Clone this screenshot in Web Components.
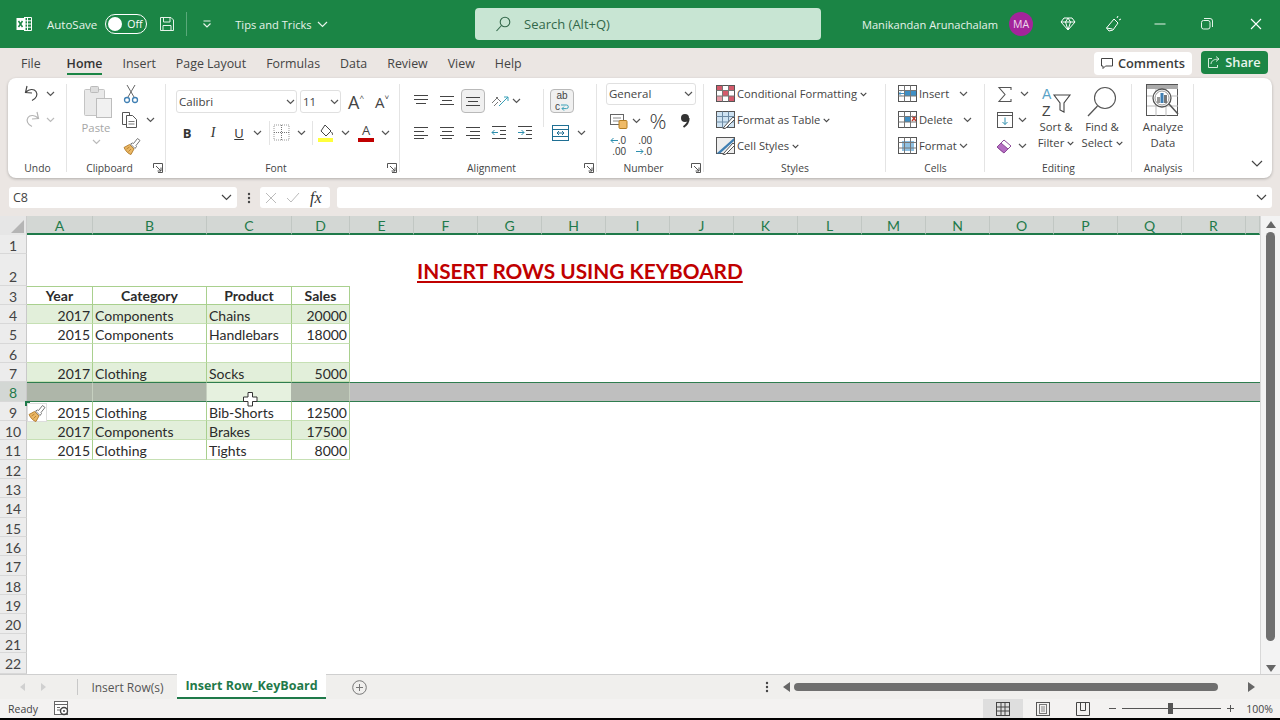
<!DOCTYPE html>
<html>
<head>
<meta charset="utf-8">
<title>Excel</title>
<style>
  html, body { margin: 0; padding: 0; background: #000; }
  body { width: 1280px; height: 720px; overflow: hidden; font-family: "Open Sans", sans-serif; }
  x-app { width: 1280px; height: 718px; }
</style>
</head>
<body>
<x-app></x-app>
<script>
const chev = (c = '#555') => `<svg width="9" height="6" viewBox="0 0 9 6"><path d="M1 1l3.500 3.500L8 1" fill="none" stroke="${c}" stroke-width="1.200"/></svg>`
const tchev = () => '<svg width="7" height="5" viewBox="0 0 7 5"><path d="M.7 .8l2.800 2.800L6.300 .8" fill="none" stroke="#444" stroke-width="1.100"/></svg>'
const svg = (w, h, body, extra = '') => `<svg width="${w}" height="${h}" viewBox="0 0 ${w} ${h}" fill="none" ${extra}>${body}</svg>`
const lines = (rows, c = '#444') => svg(16, 14, rows.map(([x1, x2, y]) => `<path d="M${x1} ${y}.5H${x2}" stroke="${c}"/>`).join(''))
const gridTable = (fill) => svg(20, 18, `${fill}<rect x=".5" y=".5" width="18" height="16" stroke="#555"/><path d="M.5 5.500h18M.5 11h18M6.500 .5v16M12.500 .5v16" stroke="#777"/>`)

const ICONS = {
  undo: svg(18, 20, '<path d="M4 2L2.500 8.500 9 9M3 8c3-3 8-3.500 10-.5 2 3 .5 7-4 9" stroke="#444" stroke-width="1.200"/>'),
  redo: svg(18, 20, '<path d="M14 2l1.500 6.500L9 9M15 8c-3-3-8-3.500-10-.5-2 3-.5 7 4 9" stroke="#b4b4b4" stroke-width="1.200"/>'),
  paste: svg(30, 34, '<rect x="1.500" y="4.500" width="20" height="26" rx="1" fill="#e9e9e9" stroke="#c4c4c4"/><rect x="7.500" y="1.500" width="8" height="6" rx="1" fill="#ddd" stroke="#bbb"/><rect x="13.500" y="13.500" width="15" height="19" fill="#f1f1f1" stroke="#bdbdbd"/>'),
  cut: svg(16, 20, '<path d="M4 1l7 12M12 1L5 13" stroke="#666"/><circle cx="4" cy="16" r="2.500" stroke="#3f7fb3" stroke-width="1.300"/><circle cx="12" cy="16" r="2.500" stroke="#3f7fb3" stroke-width="1.300"/>'),
  copy: svg(18, 18, '<path d="M5.500 13.500h-4v-12h7v3" stroke="#555"/><path d="M5.500 4.500h6l4 4v8h-10z" fill="#fff" stroke="#555"/><path d="M7.500 10.500h6M7.500 13h6" stroke="#777"/>'),
  painter: svg(18, 18, '<path d="M1 10.500l5.500-3 4.500 4.500-3 5.500c-2.500-.5-5.500-3.500-7-7z" fill="#eab765" stroke="#a8701c" stroke-width=".8"/><path d="M3.500 12l3-2M5.500 14.500l2.500-2.500" stroke="#a8701c" stroke-width=".7"/><path d="M7.500 7l2-1 1 .5 4-5 2.500 2-4 5 .5 1-1.500 2z" fill="#fff" stroke="#666" stroke-width=".9"/>'),
  border: svg(18, 18, '<rect x="1" y="1" width="15" height="15" stroke="#999" stroke-dasharray="1 1"/><path d="M8.500 1v15M1 8.500h15" stroke="#777" stroke-dasharray="1 1"/>'),
  fill: svg(18, 18, '<path d="M8 1l6 6-5 5-5-5z" stroke="#444" fill="#fff"/><path d="M14.500 8c1 1.500 1.500 2.500.5 3" stroke="#444"/><rect x="1" y="14" width="15" height="4" fill="#ffff3c"/>'),
  fontcolor: `<span style="display:block;font:13px/13px 'Open Sans',sans-serif;color:#444;text-align:center;width:16px">A<span style="display:block;height:4px;margin-top:1px;background:#c00000"></span></span>`,
  orient: svg(20, 18, '<path d="M2 11l6-6M4 14l4-4M6 5l5 5" stroke="#777"/><path d="M9 14l9-9M18 5h-4M18 5v4" stroke="#38a0b8"/>'),
  merge: svg(20, 18, '<rect x="1.500" y="1.500" width="16" height="15" fill="#fff" stroke="#1f6f93"/><path d="M1.500 5.500h16M1.500 12.500h16M6 9h7M6 9l2-2M6 9l2 2M13 9l-2-2M13 9l-2 2" stroke="#1f6f93"/>'),
  outdent: svg(16, 14, '<path d="M1 .5h14M9 4.500h6M9 8.500h6M1 12.500h14" stroke="#444"/><path d="M1 6.500h6M1 6.500l2.500-2.500M1 6.500l2.500 2.500" stroke="#2e8fae"/>'),
  indent: svg(16, 14, '<path d="M1 .5h14M9 4.500h6M9 8.500h6M1 12.500h14" stroke="#444"/><path d="M7 6.500H1M7 6.500L4.500 4M7 6.500L4.500 9" stroke="#2e8fae"/>'),
  account: svg(20, 18, '<rect x="1.500" y="2.500" width="13" height="10" fill="#fff" stroke="#666"/><path d="M4 6h8M4 9h8" stroke="#888"/><rect x="10" y="8.500" width="8" height="8" rx="1" fill="#f0bb67" stroke="#b57e22"/>'),
  comma: svg(10, 16, '<circle cx="5" cy="5" r="4" fill="#333"/><path d="M8.500 5c.5 4-2 7-5 9" stroke="#333" stroke-width="2"/>'),
  cond: gridTable('<rect x="1" y="1" width="5" height="5" fill="#d35a6b"/><rect x="13" y="1" width="5" height="5" fill="#d35a6b"/><rect x="7" y="6" width="5" height="5" fill="#d35a6b"/><rect x="1" y="11" width="5" height="5" fill="#e89aa5"/><rect x="13" y="11" width="5" height="5" fill="#d35a6b"/>'),
  table: svg(20, 18, '<rect x=".5" y=".5" width="18" height="16" fill="#cfe3f2" stroke="#555"/><path d="M.5 5.500h18M.5 11h18M6.500 .5v16M12.500 .5v16" stroke="#6d8ba5"/><path d="M8 16l9-10 2 2-9 9-3 1z" fill="#fff" stroke="#555"/>'),
  cellstyle: svg(20, 18, '<rect x=".5" y=".5" width="18" height="16" fill="#eee" stroke="#555"/><path d="M.5 16.500L18 1v3L4 16.500z" fill="#3f7fb3"/><path d="M8 16l9-10 2 2-9 9-3 1z" fill="#fff" stroke="#555"/>'),
  insert: gridTable('<rect x="7" y="6" width="11" height="5" fill="#3f8fc4"/><path d="M1 8.500h5M1 8.500l2-2M1 8.500l2 2" stroke="#3f8fc4"/>'),
  del: gridTable('<rect x="7" y="6" width="5" height="5" fill="#3f8fc4"/><path d="M14 5l4 5M18 5l-4 5" stroke="#c0392b" stroke-width="1.400"/>'),
  format: gridTable('<rect x="4" y="4" width="12" height="10" fill="#8fc1e3"/>'),
  sigma: svg(16, 17, '<path d="M14 4V1.500H2L8 8.500l-6 7h12V13" stroke="#555" stroke-width="1.100"/>'),
  filldown: svg(18, 17, '<rect x="1.500" y=".5" width="15" height="15" fill="#fff" stroke="#555"/><path d="M1.500 3.500h15" stroke="#555"/><path d="M9 5.500v7M9 12.500l-2.500-2.500M9 12.500l2.500-2.500" stroke="#2e8fae"/>'),
  clear: svg(18, 16, '<path d="M1 9l7-7 7 6-7 7z" fill="#fff" stroke="#8c4a97"/><path d="M1 9l4-4 7 6-4 4z" fill="#b56cc2" stroke="#8c4a97"/>'),
  sort: svg(32, 32, `<text x="2" y="13" font-family="Liberation Sans,sans-serif" font-size="14" fill="#5aa3c7">A</text><text x="2" y="29.500" font-family="Liberation Sans,sans-serif" font-size="14" fill="#444">Z</text><path d="M14 9h16l-6 8v9l-4-2v-7z" fill="#fff" stroke="#444" stroke-width="1.100"/>`),
  find: svg(32, 32, '<circle cx="19" cy="12" r="10.500" stroke="#555" stroke-width="1.100"/><path d="M11.500 20L2 30" stroke="#555" stroke-width="1.300"/>'),
  analyze: svg(34, 34, '<rect x=".5" y=".5" width="31" height="31" fill="#fff" stroke="#555"/><rect x="1" y="1" width="31" height="4" fill="#aaa"/><path d="M1 12h31M1 22h31M10 5v27M20 5v27" stroke="#bbb"/><circle cx="16" cy="14" r="9" fill="#fff" stroke="#555" stroke-width="1.300"/><circle cx="16" cy="14" r="7" fill="#fff" stroke="#999"/><rect x="11" y="13" width="3" height="6" fill="#999"/><rect x="14.500" y="9" width="3" height="10" fill="#3f7fb3"/><rect x="18" y="11" width="3" height="8" fill="#777"/><path d="M23 20l9 10" stroke="#555" stroke-width="1.500"/>'),
  launcher: svg(10, 10, '<path d="M.5 5V.5H9.500V9.500H5" stroke="#555"/><path d="M3 3l5 5M8 4.500V8H4.500" stroke="#555"/>'),
}

// a row of cells placed by their centre x, in flow: each cell only gets a margin from the one before
const cells = (x0, list) => {
  let x = x0
  return list.map(([cx, content, w = 20]) => {
    const left = cx - w / 2
    const html = `<span class="c" style="width:${w}px;margin-left:${left - x}px">${content}</span>`
    x = left + w
    return html
  }).join('')
}

class XGroup extends HTMLElement {
  constructor() {
    super()
    const w = this.getAttribute('width')
    const launcher = this.hasAttribute('launcher')
    this.attachShadow({ mode: 'open' }).innerHTML = `
      <style>
        :host { display: block; width: ${w}px; height: 100px; padding: 6px 0; box-sizing: border-box; flex: none; }
        .box { height: 88px; border-right: 1px solid ${this.hasAttribute('nosep') ? 'transparent' : '#e4e4e4'}; display: flex; flex-direction: column; box-sizing: border-box; }
        .body { flex: 1; min-height: 0; }
        .foot { height: 16px; margin-bottom: -4px; display: flex; align-items: center; justify-content: center; position: relative; font-size: 10.300px; color: #444; padding: 0 ${launcher ? 14 : 0}px 0 1px; }
        .launch { position: absolute; right: 2px; top: 3px; line-height: 0; }
      </style>
      <div class="box">
        <div class="body"><slot></slot></div>
        <div class="foot">${this.getAttribute('label')}${launcher ? `<span class="launch">${ICONS.launcher}</span>` : ''}</div>
      </div>`
  }
}
customElements.define('x-group', XGroup)

class XRibbon extends HTMLElement {
  constructor() {
    super()
    this.attachShadow({ mode: 'open' }).innerHTML = `
      <style>
        :host { display: flex; margin: 0 8px; width: 1264px; height: 100px; background: #fff; border-radius: 8px; box-shadow: 0 1px 3px rgba(0,0,0,.25); font-size: 11.200px; color: #444; position: relative; flex: none; }
        .r { display: flex; align-items: center; }
        .c { display: inline-flex; flex: none; align-items: center; justify-content: center; line-height: 0; }
        .ic { display: inline-flex; flex: none; width: 20px; line-height: 0; }
        .t { margin: 0 0 2px 1px; white-space: nowrap; }
        .t svg { vertical-align: 1px; }
        .dd { box-sizing: border-box; background: #fff; border: 1px solid #e0e0e0; border-radius: 3px; height: 23px; display: flex; align-items: center; justify-content: space-between; padding: 0 1px 0 2px; line-height: 14px; font-size: 11.500px; color: #444; }
        .sep { display: block; width: 1px; height: 24px; background: #e4e4e4; }
        .on { box-sizing: border-box; width: 24px; height: 24px; background: #f0f0f0; border: 1px solid #b9b9b9; border-radius: 4px; }
        .pct { font-size: 21px; line-height: 21px; font-weight: 300; color: #333; }
        .num { font: 10px/11.500px "Liberation Sans", sans-serif; text-align: right; color: #444; white-space: nowrap; }
        .big { display: flex; flex-direction: column; align-items: center; flex: none; font-size: 11.300px; line-height: 16px; white-space: nowrap; }
        .big .pic { height: 30px; display: flex; align-items: center; justify-content: center; margin-bottom: 2px; }
        .big svg { vertical-align: 1px; }
        .gray { color: #a6a6a6; }
        .aa { font-size: 18px; line-height: 18px; color: #444; }
        .aa sup { font-size: 8px; line-height: 8px; vertical-align: 8px; }
        .b { font-weight: 700; font-size: 13px; color: #333; } .i { font-style: italic; font-family: "Liberation Serif", serif; font-size: 14px; color: #333; } .u { text-decoration: underline; font-size: 13px; color: #333; }
        .collapse { position: absolute; right: 9px; bottom: 10px; line-height: 0; }
        .wrap { display: block; font: 10px/11px "Liberation Sans", sans-serif; text-align: center; color: #444; }
        .wrap svg { vertical-align: -1px; }
      </style>
      <x-group width="59" label="Undo">
        <div class="r" style="height:26px;margin-top:-3px">${cells(0, [[24, ICONS.undo], [42, chev()]])}</div>
        <div class="r" style="height:26px">${cells(0, [[24, ICONS.redo], [42, chev('#bbb')]])}</div>
      </x-group>
      <x-group width="99" label="Clipboard" launcher>
        <div class="r" style="align-items:flex-start;margin-top:-3px;height:78px">
          <div class="big gray" style="width:30px;margin-left:14px;padding-top:4px"><div class="pic" style="height:36px;margin:-1px 0 0 3px">${ICONS.paste}</div>Paste<span style="line-height:10px;margin-top:1px">${chev('#bbb')}</span></div>
          <div style="margin-left:10px;width:46px">
            <div class="r" style="height:26px">${cells(0, [[10, ICONS.cut]])}</div>
            <div class="r" style="height:26px">${cells(0, [[9, ICONS.copy], [29, chev()]])}</div>
            <div class="r" style="height:26px">${cells(0, [[11, ICONS.painter]])}</div>
          </div>
        </div>
      </x-group>
      <x-group width="234" label="Font" launcher>
        <div class="r" style="margin:6px 0 8px;height:23px">
          <div class="dd" style="width:121px;margin-left:10px"><span>Calibri</span>${chev()}</div>
          <div class="dd" style="width:41px;margin-left:3px"><span>11</span>${chev()}</div>
          ${cells(0, [[15, '<span class="aa">A<sup>^</sup></span>', 26], [41, '<span class="aa" style="font-size:15px">A<sup>˅</sup></span>', 26]])}
        </div>
        <div class="r" style="height:24px">${cells(0, [
          [21, '<span class="b">B</span>'], [47, '<span class="i">I</span>'], [73, '<span class="u">U</span>'], [91, chev(), 12],
          [103, '<span class="sep"></span>', 1], [116, ICONS.border], [135, chev(), 10], [146, '<span class="sep"></span>', 1],
          [160, ICONS.fill], [179, chev(), 10], [200, ICONS.fontcolor], [219, chev(), 10]])}</div>
      </x-group>
      <x-group width="197" label="Alignment" launcher>
        <div class="r" style="margin:5px 0 8px;height:24px">${cells(0, [
          [21, lines([[1, 15, 1], [1, 15, 5], [3, 13, 9]])], [47, lines([[1, 15, 2], [3, 13, 6], [1, 15, 10]])],
          [73, `<span class="c on">${lines([[1, 15, 3], [3, 13, 7], [1, 15, 11]])}</span>`, 24], [100, ICONS.orient], [116, chev(), 10],
          [143, '<span class="sep" style="height:38px;margin-top:14px"></span>', 1],
          [162, `<span class="c on"><span class="wrap">ab<br>c${svg(9, 8, '<path d="M1 2h5.500a1.800 1.800 0 010 3.600H2M4 3.600L2 5.600l2 2" stroke="#3aa1b8"/>')}</span></span>`, 24]])}</div>
        <div class="r" style="height:24px">${cells(0, [
          [21, lines([[1, 15, 1], [1, 11, 5], [1, 15, 9], [1, 11, 12]])], [47, lines([[1, 15, 1], [3, 13, 5], [1, 15, 9], [3, 13, 12]])],
          [73, lines([[1, 15, 1], [5, 15, 5], [1, 15, 9], [5, 15, 12]])], [99, ICONS.outdent], [125, ICONS.indent],
          [161, ICONS.merge], [181, chev(), 10]])}</div>
      </x-group>
      <x-group width="107" label="Number" launcher>
        <div class="dd" style="width:90px;height:22px;margin:-1px 0 3px 9px;padding-right:2px"><span>General</span>${chev()}</div>
        <div class="r" style="height:26px">${cells(0, [[22, ICONS.account], [39, chev(), 10], [61, '<span class="pct">%</span>', 24], [88, ICONS.comma, 12]])}</div>
        <div class="r" style="height:24px">${cells(0, [
          [21, `<span class="num">${svg(8, 7, '<path d="M8 3.500H1M1 3.500L3.500 1M1 3.500L3.500 6" stroke="#2e8fae"/>')}.0<br>.00</span>`, 24],
          [47, `<span class="num">.00<br>${svg(8, 7, '<path d="M0 3.500h7M7 3.500L4.500 1M7 3.500L4.500 6" stroke="#2e8fae"/>')}.0</span>`, 24]])}</div>
      </x-group>
      <x-group width="182" label="Styles">
        <div style="margin-top:-3px">
          <div class="r" style="height:26px;padding-left:12px"><span class="ic">${ICONS.cond}</span><span class="t">Conditional Formatting ${tchev()}</span></div>
          <div class="r" style="height:26px;padding-left:12px"><span class="ic">${ICONS.table}</span><span class="t">Format as Table ${tchev()}</span></div>
          <div class="r" style="height:26px;padding-left:12px"><span class="ic">${ICONS.cellstyle}</span><span class="t">Cell Styles ${tchev()}</span></div>
        </div>
      </x-group>
      <x-group width="99" label="Cells">
        <div style="margin-top:-3px">
          <div class="r" style="height:26px;padding-left:12px"><span class="ic">${ICONS.insert}</span><span class="t">Insert</span><span style="margin-left:10px;line-height:0">${chev()}</span></div>
          <div class="r" style="height:26px;padding-left:12px"><span class="ic">${ICONS.del}</span><span class="t">Delete</span><span style="margin-left:10px;line-height:0">${chev()}</span></div>
          <div class="r" style="height:26px;padding-left:12px"><span class="ic">${ICONS.format}</span><span class="t">Format</span><span style="margin-left:2px;line-height:0">${chev()}</span></div>
        </div>
      </x-group>
      <x-group width="147" label="Editing">
        <div class="r" style="align-items:flex-start;margin-top:-3px">
          <div style="width:46px">
            <div class="r" style="height:26px">${cells(0, [[20, ICONS.sigma], [39, chev(), 10]])}</div>
            <div class="r" style="height:26px">${cells(0, [[20, ICONS.filldown], [37, chev(), 10]])}</div>
            <div class="r" style="height:26px">${cells(0, [[20, ICONS.clear], [37, chev(), 10]])}</div>
          </div>
          <div class="big" style="width:48px;margin-left:1px;padding-top:6px"><div class="pic">${ICONS.sort}</div>Sort &amp;<span>Filter ${tchev()}</span></div>
          <div class="big" style="width:48px;margin-left:-2px;padding-top:6px"><div class="pic">${ICONS.find}</div>Find &amp;<span>Select ${tchev()}</span></div>
        </div>
      </x-group>
      <x-group width="62" label="Analysis">
        <div class="big" style="padding-left:1px"><div class="pic" style="height:34px;margin-bottom:1px">${ICONS.analyze}</div>Analyze<span>Data</span></div>
      </x-group>
      <span class="collapse">${svg(12, 8, '<path d="M1 1l5 5 5-5" stroke="#444" stroke-width="1.200"/>')}</span>`
  }
}
customElements.define('x-ribbon', XRibbon)

class XTitlebar extends HTMLElement {
  constructor() {
    super()
    this.attachShadow({ mode: 'open' }).innerHTML = `
      <style>
        :host { display: flex; align-items: center; height: 48px; background: #1b8545; color: #fff; font-size: 11.100px; flex: none; }
        .left { width: 475px; flex: none; display: flex; align-items: center; }
        .right { flex: 1; display: flex; align-items: center; justify-content: flex-end; padding-right: 12px; }
        .logo { margin-left: 16px; line-height: 0; }
        .auto { margin-left: 15px; color: #e6f3ea; font-size: 11.500px; }
        .toggle { margin-left: 8px; width: 42px; height: 20px; box-sizing: border-box; border: 1px solid #fff; border-radius: 10px; display: flex; align-items: center; font-size: 10.500px; }
        .toggle i { width: 14px; height: 14px; border-radius: 50%; background: #fff; margin: 0 5px 0 2px; }
        .save { margin-left: 12px; line-height: 0; }
        .div { margin-left: 11px; width: 1px; height: 24px; background: #5aa97a; }
        .qat { margin-left: 15px; line-height: 0; }
        .doc { margin-left: 23px; color: #e6f3ea; white-space: nowrap; }
        .doc svg { margin-left: 5px; vertical-align: 1px; }
        .search { width: 346px; height: 32px; border-radius: 4px; background: #c8e5d3; color: #33684a; display: flex; align-items: center; font-size: 13px; flex: none; }
        .search svg { margin: 0 13px 0 20px; }
        .name { white-space: nowrap; color: #e6f3ea; }
        .avatar { margin-left: 11px; width: 24px; height: 24px; border-radius: 50%; background: #a3249b; display: flex; align-items: center; justify-content: center; font-size: 10.500px; color: #eedcec; }
        .w { line-height: 0; display: flex; justify-content: center; width: 24px; }
      </style>
      <div class="left">
        <span class="logo">${svg(16, 16, '<path d="M8 1.500h7.500v13H8" stroke="#fff"/><path d="M8 4.800h7.500M8 8h7.500M8 11.200h7.500M11.500 1.500v13" stroke="#fff"/><rect x=".5" y="2" width="9" height="12" fill="#fff"/><path d="M2.500 5l4 6M6.500 5l-4 6" stroke="#1b8545" stroke-width="1.500"/>')}</span>
        <span class="auto">AutoSave</span>
        <span class="toggle"><i></i>Off</span>
        <span class="save">${svg(16, 16, '<path d="M1.500 1.500h10.500l2.500 2.500v10.500H1.500z" stroke="#e6f3ea"/><path d="M4.500 1.500v4.500h6.500V1.500M4 14.500V9.500h8v5" stroke="#e6f3ea"/>')}</span>
        <span class="div"></span>
        <span class="qat">${svg(10, 8, '<path d="M1.500 1h7" stroke="#e6f3ea"/><path d="M1.500 3.500L5 7l3.500-3.500" stroke="#e6f3ea" stroke-width="1.200"/>')}</span>
        <span class="doc">Tips and Tricks${svg(11, 7, '<path d="M1 1l4.500 4.500L10 1" stroke="#e6f3ea" stroke-width="1.200"/>')}</span>
      </div>
      <div class="search">${svg(16, 16, '<circle cx="10" cy="6" r="4.800" stroke="#33684a" stroke-width="1.100"/><path d="M6.500 9.500L1.500 15" stroke="#33684a" stroke-width="1.100"/>')}Search (Alt+Q)</div>
      <div class="right">
        <span class="name">Manikandan Arunachalam</span>
        <span class="avatar">MA</span>
        <span class="w" style="margin-left:23px">${svg(16, 14, '<path d="M4 1h8l3 4-7 8-7-8zM1 5h14M5.500 5L8 13l2.500-8M5.500 5L8 1l2.500 4" stroke="#fff" stroke-width="1"/>')}</span>
        <span class="w" style="margin-left:21px">${svg(16, 18, '<path d="M4 16L1.500 13 9 4l4 4-5 7zM1.500 13l6 1" stroke="#fff"/><path d="M12 3l1-2M14 5l2-1" stroke="#fff"/>')}</span>
        <span class="w" style="margin-left:23px">${svg(12, 2, '<path d="M.5 1h11" stroke="#e6f3ea"/>')}</span>
        <span class="w" style="margin-left:23px">${svg(12, 12, '<rect x=".5" y="2.500" width="8.500" height="8.500" rx="2" stroke="#e6f3ea"/><path d="M3 .5h6a2.500 2.500 0 012.500 2.500v6" stroke="#e6f3ea"/>')}</span>
        <span class="w" style="margin-left:25px">${svg(12, 12, '<path d="M1 1l10 10M11 1L1 11" stroke="#fff" stroke-width="1.100"/>')}</span>
      </div>`
  }
}
customElements.define('x-titlebar', XTitlebar)

class XTabs extends HTMLElement {
  constructor() {
    super()
    const tabs = ['File', 'Home', 'Insert', 'Page Layout', 'Formulas', 'Data', 'Review', 'View', 'Help']
    this.attachShadow({ mode: 'open' }).innerHTML = `
      <style>
        :host { display: flex; align-items: center; height: 30px; background: #ebe6e3; font-size: 12.400px; color: #444; flex: none; }
        .list { display: flex; align-items: center; gap: 20px; margin-left: 21px; }
        .tab { position: relative; white-space: nowrap; }
        .tab.on { font-weight: 600; color: #333; margin-left: 6px; }
        .tab.on::after { content: ""; position: absolute; left: 0; right: 0; bottom: -3px; height: 2px; background: #1b8545; }
        .right { margin-left: auto; display: flex; align-items: center; margin-right: 12px; }
        button { all: unset; display: flex; align-items: center; justify-content: center; height: 23px; padding-bottom: 2px; border-radius: 4px; font-size: 12.800px; font-weight: 600; box-sizing: border-box; }
        .comments { width: 98px; background: #fff; color: #3c3c3c; margin-right: 9px; margin-top: 1px; }
        .share { width: 67px; background: #1b8545; color: #e9f5ee; margin-top: -1px; }
        button svg { margin-right: 5px; }
      </style>
      <div class="list">${tabs.map(t => `<span class="tab${t === 'Home' ? ' on' : ''}">${t}</span>`).join('')}</div>
      <div class="right">
        <button class="comments">${svg(12, 12, '<path d="M.5 1.500h11v7.500H4.500L2 11.500V9H.5z" stroke="#444"/>')}Comments</button>
        <button class="share">${svg(12, 12, '<path d="M4 2.500H.5v9h9V9" stroke="#d3ecdc"/><path d="M3 8c0-3 3-5 8-5M8 .5L11 3 8 5.500" stroke="#d3ecdc"/>')}Share</button>
      </div>`
  }
}
customElements.define('x-tabs', XTabs)

class XFormulaBar extends HTMLElement {
  constructor() {
    super()
    this.attachShadow({ mode: 'open' }).innerHTML = `
      <style>
        :host { display: flex; height: 38px; padding: 9px 8px 8px 9px; box-sizing: border-box; background: #ebe6e3; flex: none; align-items: stretch; font-size: 12.500px; color: #444; }
        .box { background: #fff; border-radius: 3px; display: flex; align-items: center; }
        .name { width: 228px; padding: 0 5px 0 4px; box-sizing: border-box; justify-content: space-between; }
        .dots { width: 23px; display: flex; align-items: center; justify-content: center; line-height: 0; }
        .fx { width: 70px; padding-left: 5px; box-sizing: border-box; gap: 9px; }
        .fx i { font: italic 16px "Liberation Serif", serif; color: #333; margin-left: 1px; }
        .input { flex: 1; margin-left: 7px; justify-content: flex-end; padding-right: 5px; }
      </style>
      <div class="box name"><span>C8</span>${svg(11, 7, '<path d="M1 1l4.500 4.500L10 1" stroke="#444" stroke-width="1.200"/>')}</div>
      <div class="dots">${svg(4, 12, '<circle cx="2" cy="2" r="1.200" fill="#444"/><circle cx="2" cy="6" r="1.200" fill="#444"/><circle cx="2" cy="10" r="1.200" fill="#444"/>')}</div>
      <div class="box fx">${svg(12, 12, '<path d="M1 1l10 10M11 1L1 11" stroke="#bbb"/>')}${svg(14, 11, '<path d="M1 6l4 4 8-9" stroke="#bbb"/>')}<i>fx</i></div>
      <div class="box input">${svg(11, 7, '<path d="M1 1l4.500 4.500L10 1" stroke="#444" stroke-width="1.200"/>')}</div>`
  }
}
customElements.define('x-formula-bar', XFormulaBar)

class XSheet extends HTMLElement {
  constructor() {
    super()
    const widths = [27, 66, 114, 85, 58, ...Array(14).fill(64), 14]
    const letters = 'ABCDEFGHIJKLMNOPQR'.split('')
    const data = {
      3: ['Year', 'Category', 'Product', 'Sales'],
      4: ['2017', 'Components', 'Chains', '20000'],
      5: ['2015', 'Components', 'Handlebars', '18000'],
      6: ['', '', '', ''],
      7: ['2017', 'Clothing', 'Socks', '5000'],
      8: ['', '', '', ''],
      9: ['2015', 'Clothing', 'Bib-Shorts', '12500'],
      10: ['2017', 'Components', 'Brakes', '17500'],
      11: ['2015', 'Clothing', 'Tights', '8000'],
    }
    const green = new Set([4, 7, 10])
    let html = '<div class="corner"><i></i></div>'
    widths.slice(1).forEach((_, i) => { html += `<div class="col">${letters[i] || ''}</div>` })
    for (let r = 1; r <= 22; r++) {
      html += `<div class="rh${r === 8 ? ' cur' : ''}${r === 2 ? ' tall' : ''}">${r}</div>`
      for (let c = 0; c < 19; c++) {
        let cls = 'cell'
        let text = ''
        const inTable = data[r] && c < 4
        if (inTable) {
          text = data[r][c]
          cls += ' t'
          if (r === 3) cls += ' head'
          else if (c === 0 || c === 3) cls += ' num'
          if (green.has(r)) cls += ' g'
        }
        if (r === 8) cls += c === 2 ? ' active' : inTable ? ' sel g' : ' sel'
        if (r === 2 && c === 0) {
          html += '<div class="cell title" style="grid-column:2 / -1"><span>INSERT ROWS USING KEYBOARD</span></div>'
          break
        }
        html += `<div class="${cls}">${text}</div>`
      }
    }
    this.attachShadow({ mode: 'open' }).innerHTML = `
      <style>
        :host { display: flex; height: 458px; background: #fff; flex: none; position: relative; overflow: hidden; font-family: Lato, sans-serif; }
        .grid { display: grid; grid-template-columns: ${widths.map(w => w + 'px').join(' ')}; grid-template-rows: 19px 19px 31.800px repeat(19, 19.330px) 1fr; height: 458px; width: 1260px; flex: none; font-size: 14px; color: #2b2b2b; }
        .corner { background: #e6e6e6; position: relative; border-right: 1px solid #ccc; box-sizing: border-box; }
        .corner i { position: absolute; right: 2px; bottom: 2px; border-style: solid; border-width: 0 0 13px 13px; border-color: transparent transparent #b5b5b5 transparent; }
        .col { background: #d3d7d4; color: #1f7a4a; border-right: 1px solid #c1c7c3; border-bottom: 2px solid #1f7a4a; box-sizing: border-box; display: flex; align-items: center; justify-content: center; font-size: 14px; line-height: 1; padding-top: 3px; }
        .rh { background: #ececec; color: #444; border-right: 1px solid #c9c9c9; border-bottom: 1px solid #d8d8d8; box-sizing: border-box; display: flex; align-items: flex-start; justify-content: center; font-size: 14px; line-height: 14px; padding-top: 4px; }
        .rh.tall { padding-top: 16px; }
        .rh.cur { background: #d3d7d4; color: #1f7a4a; }
        .cell { box-sizing: border-box; min-width: 0; white-space: nowrap; padding: 4px 2px 0; line-height: 14px; display: flex; align-items: flex-start; }
        .t { border-right: 1px solid #a9d08e; border-bottom: 1px solid #c6e0b4; }
        .head { font-weight: 700; justify-content: center; border-top: 1px solid #a9d08e; border-bottom-color: #a9d08e; padding-top: 2px; }
        .num { justify-content: flex-end; }
        .g { background: #e2efda; }
        .sel { background: #bfbfbf; border-right-color: #bfbfbf; border-top: 1px solid #2f7d4f; border-bottom: 1px solid #2f7d4f; }
        .sel.g { background: #aeb6a9; border-right-color: #c6d0c0; }
        .active { background: #e6f1df; border-top: 1px solid #2f7d4f; border-bottom: 1px solid #2f7d4f; border-right: 1px solid #aeb6a9; }
        .title { padding: 3px 0 0 390px; line-height: 24px; align-items: center; justify-content: flex-start; font-size: 20.800px; font-weight: 700; color: #c00000; }
        .title span { text-decoration: underline; }
        .vbar { flex: 1; background: #f3f3f3; position: relative; border-left: 1px solid #d8d8d8; display: flex; flex-direction: column; align-items: center; padding: 5px 0 2px; box-sizing: border-box; }
        .thumb { flex: 1; width: 9px; margin: 4px 0 24px; background: #6f6f6f; border-radius: 5px; }
        .arr { line-height: 0; }
        .hs { position: absolute; left: 27px; top: 187px; width: 20px; height: 19px; background: #fff; border: 1px solid #ddd; box-sizing: border-box; display: flex; align-items: center; justify-content: center; line-height: 0; }
        .handle { position: absolute; left: 25px; top: 185px; width: 5px; height: 5px; background: #1f7a4a; }
        .cursor { position: absolute; left: 243px; top: 176px; line-height: 0; }
      </style>
      <div class="grid">${html}</div>
      <div class="vbar">
        <span class="arr">${svg(10, 7, '<path d="M5 0l5 7H0z" fill="#666"/>')}</span>
        <span class="thumb"></span>
        <span class="arr">${svg(10, 7, '<path d="M5 7l5-7H0z" fill="#666"/>')}</span>
      </div>
      <span class="handle"></span>
      <span class="hs">${ICONS.painter}</span>
      <span class="cursor">${svg(15, 15, '<path d="M5 .5h4.500V5H14v4.500H9.500V14H5V9.500H.5V5H5z" fill="#fff" stroke="#333"/>')}</span>`
  }
}
customElements.define('x-sheet', XSheet)

class XSheetTabs extends HTMLElement {
  constructor() {
    super()
    this.attachShadow({ mode: 'open' }).innerHTML = `
      <style>
        :host { display: flex; align-items: stretch; height: 25px; background: #f0efed; flex: none; font-size: 12px; color: #555; border-top: 1px solid #cfcfcf; box-sizing: border-box; }
        .nav { width: 78px; display: flex; align-items: center; gap: 16px; padding-left: 20px; box-sizing: border-box; border-right: 1px solid #c8c8c8; margin: 4px 0; }
        .t { width: 99px; display: flex; align-items: center; justify-content: center; }
        .a { width: 149px; background: #fff; color: #1f7a4a; font-weight: 700; font-size: 12.500px; display: flex; align-items: center; justify-content: center; border-bottom: 2px solid #1f7a4a; box-sizing: border-box; margin-top: -1px; }
        .plus { margin-left: 26px; display: flex; align-items: center; line-height: 0; }
        .dots { margin-left: 398px; display: flex; align-items: center; line-height: 0; }
        .hbar { margin-left: 14px; display: flex; align-items: center; line-height: 0; }
        .thumb { width: 424px; height: 8px; border-radius: 4px; background: #6f6f6f; margin: 0 30px 0 4px; }
      </style>
      <div class="nav">${svg(5, 8, '<path d="M5 0v8L0 4z" fill="#d0d0d0"/>')}${svg(5, 8, '<path d="M0 0v8l5-4z" fill="#d0d0d0"/>')}</div>
      <div class="t">Insert Row(s)</div>
      <div class="a">Insert Row_KeyBoard</div>
      <div class="plus">${svg(15, 15, '<circle cx="7.500" cy="7.500" r="6.800" stroke="#777"/><path d="M7.500 4v7M4 7.500h7" stroke="#777"/>')}</div>
      <div class="dots">${svg(4, 12, '<circle cx="2" cy="2" r="1.200" fill="#444"/><circle cx="2" cy="6" r="1.200" fill="#444"/><circle cx="2" cy="10" r="1.200" fill="#444"/>')}</div>
      <div class="hbar">${svg(7, 10, '<path d="M0 5l7-5v10z" fill="#666"/>')}<span class="thumb"></span>${svg(7, 10, '<path d="M7 5L0 0v10z" fill="#666"/>')}</div>`
  }
}
customElements.define('x-sheet-tabs', XSheetTabs)

class XStatusBar extends HTMLElement {
  constructor() {
    super()
    this.attachShadow({ mode: 'open' }).innerHTML = `
      <style>
        :host { display: flex; align-items: center; height: 19px; background: #f3f2f1; flex: none; font-size: 10.500px; color: #444; }
        .ready { margin-left: 8px; }
        .macro { margin-left: 16px; line-height: 0; }
        .views { margin-left: auto; display: flex; align-self: stretch; }
        .v { width: 40px; display: flex; align-items: center; justify-content: center; line-height: 0; }
        .v.on { background: #dedede; }
        .zoom { display: flex; align-items: center; margin: 0 0 0 6px; line-height: 0; }
        .track { width: 99px; height: 1px; background: #555; margin: 0 6px 0 6px; position: relative; }
        .track i { position: absolute; left: 46px; top: -5px; width: 5px; height: 11px; background: #555; }
        .pct { margin: 0 7px 0 12px; width: 27px; text-align: right; }
      </style>
      <span class="ready">Ready</span>
      <span class="macro">${svg(15, 15, '<rect x=".5" y=".5" width="13" height="13" fill="#fff" stroke="#666"/><path d="M.5 3.500h13M3 6.500h3M3 9h3" stroke="#666"/><circle cx="10" cy="10" r="3.500" fill="#fff" stroke="#444" stroke-width="1.400"/><circle cx="10" cy="10" r="1" fill="#444"/>')}</span>
      <div class="views">
        <span class="v on">${svg(14, 14, '<rect x=".5" y=".5" width="13" height="13" stroke="#444"/><path d="M.5 5h13M.5 9h13M5 .5v13M9 .5v13" stroke="#444"/>')}</span>
        <span class="v">${svg(14, 14, '<rect x=".5" y=".5" width="13" height="13" stroke="#555"/><rect x="3.500" y="2.500" width="7" height="9" stroke="#777"/><path d="M5 5h4M5 7h4M5 9h4" stroke="#888"/>')}</span>
        <span class="v">${svg(14, 14, '<path d="M.5 13.500V.5h13v13zM4.500 .5v8h5V.5" stroke="#444"/>')}</span>
      </div>
      <div class="zoom">${svg(7, 1, '<path d="M0 .5h7" stroke="#555"/>')}<span class="track"><i></i></span>${svg(7, 7, '<path d="M0 3.500h7M3.500 0v7" stroke="#555"/>')}</div>
      <span class="pct">100%</span>`
  }
}
customElements.define('x-status-bar', XStatusBar)

class XApp extends HTMLElement {
  constructor() {
    super()
    this.attachShadow({ mode: 'open' }).innerHTML = `
      <style>
        :host { display: flex; flex-direction: column; background: #ebe6e3; font-family: "Open Sans", sans-serif; }
      </style>
      <x-titlebar></x-titlebar>
      <x-tabs></x-tabs>
      <x-ribbon></x-ribbon>
      <x-formula-bar></x-formula-bar>
      <x-sheet></x-sheet>
      <x-sheet-tabs></x-sheet-tabs>
      <x-status-bar></x-status-bar>`
  }
}
customElements.define('x-app', XApp)
</script>
</body>
</html>
